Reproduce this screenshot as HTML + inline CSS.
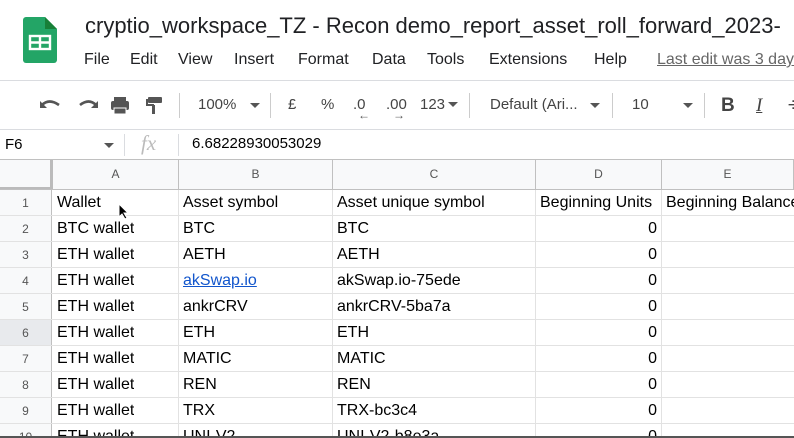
<!DOCTYPE html>
<html style="width:794px;height:438px;overflow:hidden"><head><style>
*{margin:0;padding:0;box-sizing:border-box}
body{width:794px;height:438px;overflow:hidden;background:#fff;font-family:"Liberation Sans",Arial,sans-serif;position:relative;color:#000}
.a{position:absolute;white-space:nowrap}
.title{left:85px;top:13px;font-size:22px;color:#202124}
.menu{top:51px;font-size:16px;color:#202124}
.tb{top:96px;font-size:15px;color:#444}
.hl{position:absolute;background:#dadce0;height:1px;left:0;width:794px}
.vl{position:absolute;background:#dadce0;width:1px}
.cell{position:absolute;font-size:16px;line-height:26px;white-space:nowrap;overflow:hidden}
.rh{position:absolute;left:0;width:52px;text-align:center;font-size:12px;color:#555;background:#f8f9fa;border-right:1px solid #c0c0c0}
.ch{position:absolute;top:160px;height:29px;line-height:29px;text-align:center;font-size:12px;color:#555;background:#f8f9fa;border-right:1px solid #c0c0c0}
</style></head><body>
<svg class="a" style="left:23px;top:17px" width="34" height="46" viewBox="0 0 34 46">
<path d="M3 0H22L34 12V43a3 3 0 0 1-3 3H3a3 3 0 0 1-3-3V3a3 3 0 0 1 3-3z" fill="#23a566"/>
<path d="M22 0V12H34z" fill="#188038"/>
<rect x="7" y="19" width="20" height="13" fill="none" stroke="#fff" stroke-width="2.4"/>
<line x1="7" y1="25.5" x2="27" y2="25.5" stroke="#fff" stroke-width="2.4"/>
<line x1="17" y1="19" x2="17" y2="32" stroke="#fff" stroke-width="2.4"/>
</svg>
<div class="a title">cryptio_workspace_TZ - Recon demo_report_asset_roll_forward_2023-</div>
<div class="a menu" style="left:84px">File</div>
<div class="a menu" style="left:130px">Edit</div>
<div class="a menu" style="left:178px">View</div>
<div class="a menu" style="left:234px">Insert</div>
<div class="a menu" style="left:298px">Format</div>
<div class="a menu" style="left:372px">Data</div>
<div class="a menu" style="left:427px">Tools</div>
<div class="a menu" style="left:489px">Extensions</div>
<div class="a menu" style="left:594px">Help</div>
<div class="a menu" style="left:657px;color:#666;text-decoration:underline">Last edit was 3 days ago</div>
<div class="hl" style="top:80px"></div>
<svg class="a" style="left:38px;top:96px" width="130" height="20" viewBox="0 0 130 20">
<path d="M4 9 Q11 2 21 9" fill="none" stroke="#555" stroke-width="2.6"/><path d="M2 5V12H9z" fill="#555"/>
<path d="M58 9 Q51 2 42 9" fill="none" stroke="#555" stroke-width="2.6"/><path d="M60 5V12H53z" fill="#555"/>
<rect x="73" y="5" width="18" height="9" rx="2" fill="#555"/><rect x="76" y="1" width="12" height="4" fill="#555"/><rect x="76" y="12" width="12" height="6" fill="#555" stroke="#fff" stroke-width="1"/>
<rect x="110" y="1" width="14" height="6" rx="1" fill="#555"/><rect x="108" y="3" width="2" height="6" fill="#555"/><rect x="108" y="8" width="8" height="2" fill="#555"/><rect x="114" y="9" width="3" height="9" fill="#555"/>
</svg>
<div class="vl" style="left:179px;top:93px;height:25px;background:#ccc"></div>
<div class="a tb" style="left:198px">100%</div>
<div class="a" style="left:250px;top:103px;border:5px solid transparent;border-top-color:#555"></div>
<div class="vl" style="left:270px;top:93px;height:25px;background:#ccc"></div>
<div class="a tb" style="left:288px">£</div>
<div class="a tb" style="left:321px">%</div>
<div class="a tb" style="left:353px">.0</div>
<div class="a" style="left:358px;top:108px;font-size:12px;color:#555">←</div>
<div class="a tb" style="left:386px">.00</div>
<div class="a" style="left:393px;top:108px;font-size:12px;color:#555">→</div>
<div class="a tb" style="left:420px">123</div>
<div class="a" style="left:448px;top:102px;border:5px solid transparent;border-top-color:#555"></div>
<div class="vl" style="left:469px;top:93px;height:25px;background:#ccc"></div>
<div class="a tb" style="left:490px">Default (Ari...</div>
<div class="a" style="left:590px;top:103px;border:5px solid transparent;border-top-color:#555"></div>
<div class="vl" style="left:612px;top:93px;height:25px;background:#ccc"></div>
<div class="a tb" style="left:632px">10</div>
<div class="a" style="left:683px;top:103px;border:5px solid transparent;border-top-color:#555"></div>
<div class="vl" style="left:704px;top:93px;height:25px;background:#ccc"></div>
<div class="a" style="left:721px;top:95px;font-size:19px;font-weight:bold;color:#444">B</div>
<div class="a" style="left:756px;top:95px;font-size:19px;font-style:italic;font-family:'Liberation Serif',serif;color:#444;text-decoration:underline">I</div>
<div class="a" style="left:788px;top:95px;font-size:19px;color:#444">÷</div>
<div class="hl" style="top:129px"></div>
<div class="a" style="left:5px;top:136px;font-size:15px">F6</div>
<div class="a" style="left:104px;top:143px;border:5px solid transparent;border-top-color:#555"></div>
<div class="vl" style="left:124px;top:134px;height:22px"></div>
<div class="a" style="left:141px;top:131px;font-size:21px;font-style:italic;font-family:'Liberation Serif',serif;color:#bbb">fx</div>
<div class="vl" style="left:178px;top:134px;height:22px"></div>
<div class="a" style="left:192px;top:135px;font-size:15px">6.68228930053029</div>
<div class="hl" style="top:159px;background:#c0c0c0"></div>
<div class="a" style="left:0;top:160px;width:53px;height:30px;background:#f8f9fa;border-right:3px solid #bbb;border-bottom:3px solid #bbb"></div>
<div class="ch" style="left:53px;width:126px">A</div>
<div class="ch" style="left:179px;width:154px">B</div>
<div class="ch" style="left:333px;width:203px">C</div>
<div class="ch" style="left:536px;width:126px">D</div>
<div class="ch" style="left:662px;width:132px">E</div>
<div class="hl" style="top:189px;background:#c0c0c0"></div>
<div class="vl" style="left:178px;top:190px;height:248px;background:#e2e2e2"></div>
<div class="vl" style="left:332px;top:190px;height:248px;background:#e2e2e2"></div>
<div class="vl" style="left:535px;top:190px;height:248px;background:#e2e2e2"></div>
<div class="vl" style="left:661px;top:190px;height:248px;background:#e2e2e2"></div>
<div class="rh" style="top:190px;height:26px;line-height:26px">1</div>
<div class="rh" style="top:216px;height:26px;line-height:26px">2</div>
<div class="rh" style="top:242px;height:26px;line-height:26px">3</div>
<div class="rh" style="top:268px;height:26px;line-height:26px">4</div>
<div class="rh" style="top:294px;height:26px;line-height:26px">5</div>
<div class="rh" style="top:320px;height:26px;line-height:26px;background:#e8eaed">6</div>
<div class="rh" style="top:346px;height:26px;line-height:26px">7</div>
<div class="rh" style="top:372px;height:26px;line-height:26px">8</div>
<div class="rh" style="top:398px;height:26px;line-height:26px">9</div>
<div class="rh" style="top:424px;height:14px;line-height:26px;overflow:hidden">10</div>
<div class="hl" style="top:215px;background:#e2e2e2"></div>
<div class="hl" style="top:241px;background:#e2e2e2"></div>
<div class="hl" style="top:267px;background:#e2e2e2"></div>
<div class="hl" style="top:293px;background:#e2e2e2"></div>
<div class="hl" style="top:319px;background:#e2e2e2"></div>
<div class="hl" style="top:345px;background:#e2e2e2"></div>
<div class="hl" style="top:371px;background:#e2e2e2"></div>
<div class="hl" style="top:397px;background:#e2e2e2"></div>
<div class="hl" style="top:423px;background:#e2e2e2"></div>
<div class="cell" style="left:57px;top:190px">Wallet</div>
<div class="cell" style="left:183px;top:190px">Asset symbol</div>
<div class="cell" style="left:337px;top:190px">Asset unique symbol</div>
<div class="cell" style="left:540px;top:190px">Beginning Units</div>
<div class="cell" style="left:666px;top:190px;width:128px">Beginning Balance</div>
<div class="cell" style="left:57px;top:216px">BTC wallet</div><div class="cell" style="left:183px;top:216px">BTC</div><div class="cell" style="left:337px;top:216px">BTC</div><div class="cell" style="left:540px;top:216px;width:117px;text-align:right">0</div>
<div class="cell" style="left:57px;top:242px">ETH wallet</div><div class="cell" style="left:183px;top:242px">AETH</div><div class="cell" style="left:337px;top:242px">AETH</div><div class="cell" style="left:540px;top:242px;width:117px;text-align:right">0</div>
<div class="cell" style="left:57px;top:268px">ETH wallet</div><div class="cell" style="left:183px;top:268px;color:#1155cc;text-decoration:underline">akSwap.io</div><div class="cell" style="left:337px;top:268px">akSwap.io-75ede</div><div class="cell" style="left:540px;top:268px;width:117px;text-align:right">0</div>
<div class="cell" style="left:57px;top:294px">ETH wallet</div><div class="cell" style="left:183px;top:294px">ankrCRV</div><div class="cell" style="left:337px;top:294px">ankrCRV-5ba7a</div><div class="cell" style="left:540px;top:294px;width:117px;text-align:right">0</div>
<div class="cell" style="left:57px;top:320px">ETH wallet</div><div class="cell" style="left:183px;top:320px">ETH</div><div class="cell" style="left:337px;top:320px">ETH</div><div class="cell" style="left:540px;top:320px;width:117px;text-align:right">0</div>
<div class="cell" style="left:57px;top:346px">ETH wallet</div><div class="cell" style="left:183px;top:346px">MATIC</div><div class="cell" style="left:337px;top:346px">MATIC</div><div class="cell" style="left:540px;top:346px;width:117px;text-align:right">0</div>
<div class="cell" style="left:57px;top:372px">ETH wallet</div><div class="cell" style="left:183px;top:372px">REN</div><div class="cell" style="left:337px;top:372px">REN</div><div class="cell" style="left:540px;top:372px;width:117px;text-align:right">0</div>
<div class="cell" style="left:57px;top:398px">ETH wallet</div><div class="cell" style="left:183px;top:398px">TRX</div><div class="cell" style="left:337px;top:398px">TRX-bc3c4</div><div class="cell" style="left:540px;top:398px;width:117px;text-align:right">0</div>
<div class="cell" style="left:57px;top:424px;height:12px">ETH wallet</div><div class="cell" style="left:183px;top:424px;height:12px">UNI-V2</div><div class="cell" style="left:337px;top:424px;height:12px">UNI-V2-b8e3a</div><div class="cell" style="left:540px;top:424px;width:117px;height:12px;text-align:right">0</div>
<div class="hl" style="top:436px;height:2px;background:#555"></div>
<svg class="a" style="left:118px;top:203px" width="12" height="17" viewBox="0 0 12 17"><path d="M1 1V14L4 11L7 16L9 15L6 10H10z" fill="#000" stroke="#fff" stroke-width="1"/></svg>
</body></html>
